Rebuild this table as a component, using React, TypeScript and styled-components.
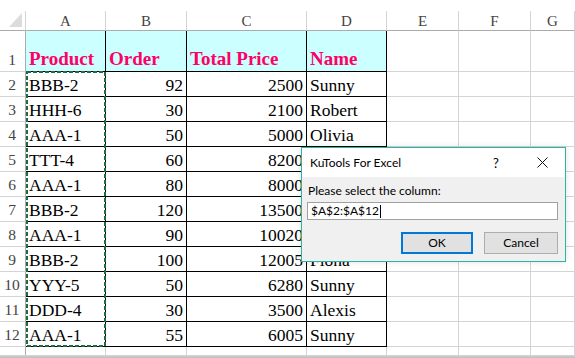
import React from "react";
import styled, { createGlobalStyle } from "styled-components";

const Global = createGlobalStyle`
  html, body { margin: 0; padding: 0; background: #fff; }
  body { width: 575px; height: 358px; overflow: hidden; }
`;

const COLS = "26px 80px 81px 120px 80px 72px 72px 1fr";
const SERIF = `"Liberation Serif", "Times New Roman", serif`;
const UI = `Lato, "Noto Sans", sans-serif`;

const Sheet = styled.div`
  position: relative;
  width: 575px;
  height: 358px;
  overflow: hidden;
  background: #fff;
  display: flex;
  flex-direction: column;
`;

const TopStrip = styled.div`
  height: 11px;
  flex: none;
`;

const GridViewport = styled.div`
  height: 344px;
  flex: none;
  overflow: hidden;
`;

const BottomBar = styled.div`
  height: 3px;
  flex: none;
  background: linear-gradient(#d6d6d6, #bdbdbd);
`;

const Grid = styled.div`
  display: grid;
  grid-template-columns: ${COLS};
  grid-template-rows: 20px 41px repeat(12, 25px);
`;

const Corner = styled.div`
  position: relative;
  border-right: 1px solid #d4d4d4;
  border-bottom: 1px solid #ababab;
`;

const CornerTriangle = styled.span`
  position: absolute;
  left: 9px;
  top: 2px;
  width: 13px;
  height: 14px;
  background: #dcdcdc;
  clip-path: polygon(100% 0, 100% 100%, 0 100%);
`;

const ColHead = styled.div`
  border-right: 1px solid #d4d4d4;
  border-bottom: 1px solid #ababab;
  display: flex;
  align-items: center;
  justify-content: center;
  font-family: ${SERIF};
  font-size: 15px;
  line-height: 18px;
  color: #444;
`;

const RowHead = styled.div`
  border-right: 1px solid #ababab;
  border-bottom: 1px solid #d4d4d4;
  display: flex;
  align-items: flex-end;
  justify-content: center;
  padding: 0 1px 2px 0;
  font-family: ${SERIF};
  font-size: 15.5px;
  line-height: 18px;
  color: #444;
`;

const Cell = styled.div<{ $right?: boolean; $boxed?: boolean; $title?: boolean }>`
  border-right: 1px solid ${(p) => (p.$boxed ? "#000" : "#d4d4d4")};
  border-bottom: 1px solid ${(p) => (p.$boxed ? "#000" : "#d4d4d4")};
  background: ${(p) => (p.$title && p.$boxed ? "#ccffff" : "#fff")};
  display: flex;
  align-items: flex-end;
  justify-content: ${(p) => (p.$right ? "flex-end" : "flex-start")};
  padding: 0 3px 1px 3px;
  overflow: hidden;
  white-space: nowrap;
  font-family: ${SERIF};
  font-size: ${(p) => (p.$title ? "19px" : "17.5px")};
  font-weight: ${(p) => (p.$title ? 700 : 400)};
  line-height: ${(p) => (p.$title ? "22px" : "20px")};
  color: ${(p) => (p.$title ? "#ff0066" : "#000")};
`;

const Marquee = styled.svg`
  position: absolute;
  left: 26px;
  top: 71px;
  width: 80px;
  height: 276px;
  pointer-events: none;
`;

/* Dialog */
const Dialog = styled.div`
  position: absolute;
  left: 301px;
  top: 147px;
  width: 263px;
  height: 113px;
  border: 1px solid #2db3a1;
  background: #f0f0f0;
  display: flex;
  flex-direction: column;
  font-family: ${UI};
  color: #000;
  box-shadow: 0 0 6px rgba(0, 0, 0, 0.12);
`;

const TitleBar = styled.div`
  height: 29px;
  background: #fff;
  display: flex;
  align-items: center;
  flex: none;
`;

const TitleText = styled.div`
  flex: 1;
  padding-left: 8px;
  font-size: 12px;
  line-height: 16px;
  padding-top: 1px;
`;

const TitleButton = styled.div`
  width: 46px;
  height: 29px;
  display: flex;
  align-items: center;
  justify-content: center;
  font-size: 13px;
  line-height: 16px;
`;

const Body = styled.div`
  flex: 1;
  padding: 6px 7px 0 5px;
  display: flex;
  flex-direction: column;
`;

const Label = styled.div`
  font-size: 12px;
  line-height: 16px;
  padding-left: 1px;
`;

const Input = styled.div`
  margin-top: 3px;
  height: 16px;
  border: 1px solid #a0a0a0;
  background: #fff;
  display: flex;
  align-items: center;
  padding-left: 3px;
  font-size: 12px;
  line-height: 16px;
`;

const Caret = styled.span`
  display: inline-block;
  width: 1px;
  height: 13px;
  background: #000;
  margin-left: 1px;
`;

const Buttons = styled.div`
  margin-top: 12px;
  display: flex;
  justify-content: flex-end;
  gap: 11px;
`;

const Button = styled.div<{ $primary?: boolean; $w: number }>`
  width: ${(p) => p.$w}px;
  height: 22px;
  box-sizing: border-box;
  border: ${(p) => (p.$primary ? "2px solid #0078d7" : "1px solid #adadad")};
  background: #e1e1e1;
  display: flex;
  align-items: center;
  justify-content: center;
  font-size: 12px;
  line-height: 16px;
`;

type Row = [string, string, string, string];

const header: Row = ["Product", "Order", "Total Price", "Name"];
const rows: Row[] = [
  ["BBB-2", "92", "2500", "Sunny"],
  ["HHH-6", "30", "2100", "Robert"],
  ["AAA-1", "50", "5000", "Olivia"],
  ["TTT-4", "60", "8200", ""],
  ["AAA-1", "80", "8000", ""],
  ["BBB-2", "120", "13500", ""],
  ["AAA-1", "90", "10020", ""],
  ["BBB-2", "100", "12005", "Fiona"],
  ["YYY-5", "50", "6280", "Sunny"],
  ["DDD-4", "30", "3500", "Alexis"],
  ["AAA-1", "55", "6005", "Sunny"],
];

const letters = ["A", "B", "C", "D", "E", "F", "G"];

export default function App() {
  return (
    <>
      <Global />
      <Sheet>
        <TopStrip />
        <GridViewport>
          <Grid>
            <Corner>
              <CornerTriangle />
            </Corner>
            {letters.map((l) => (
              <ColHead key={l}>{l}</ColHead>
            ))}
            <RowHead>1</RowHead>
            {header.map((h) => (
              <Cell key={h} $boxed $title>
                {h}
              </Cell>
            ))}
            <Cell />
            <Cell />
            <Cell />
            {rows.map((r, i) => (
              <React.Fragment key={i}>
                <RowHead>{i + 2}</RowHead>
                <Cell $boxed>{r[0]}</Cell>
                <Cell $boxed $right>
                  {r[1]}
                </Cell>
                <Cell $boxed $right>
                  {r[2]}
                </Cell>
                <Cell $boxed>{r[3]}</Cell>
                <Cell />
                <Cell />
                <Cell />
              </React.Fragment>
            ))}
            <RowHead>13</RowHead>
            <Cell />
            <Cell />
            <Cell />
            <Cell />
            <Cell />
            <Cell />
            <Cell />
          </Grid>
        </GridViewport>
        <BottomBar />

        <Marquee viewBox="0 0 80 276">
          <rect
            x="1"
            y="1"
            width="78"
            height="274"
            fill="none"
            stroke="#1d6b41"
            strokeWidth="2"
            strokeDasharray="4 2"
          />
        </Marquee>

        <Dialog>
          <TitleBar>
            <TitleText>KuTools For Excel</TitleText>
            <TitleButton>?</TitleButton>
            <TitleButton>
              <svg width="11" height="11" viewBox="0 0 11 11">
                <path d="M0.5 0.5 L10.5 10.5 M10.5 0.5 L0.5 10.5" stroke="#111" strokeWidth="1" fill="none" />
              </svg>
            </TitleButton>
          </TitleBar>
          <Body>
            <Label>Please select the column:</Label>
            <Input>
              $A$2:$A$12
              <Caret />
            </Input>
            <Buttons>
              <Button $primary $w={72}>
                OK
              </Button>
              <Button $w={74}>Cancel</Button>
            </Buttons>
          </Body>
        </Dialog>
      </Sheet>
    </>
  );
}
